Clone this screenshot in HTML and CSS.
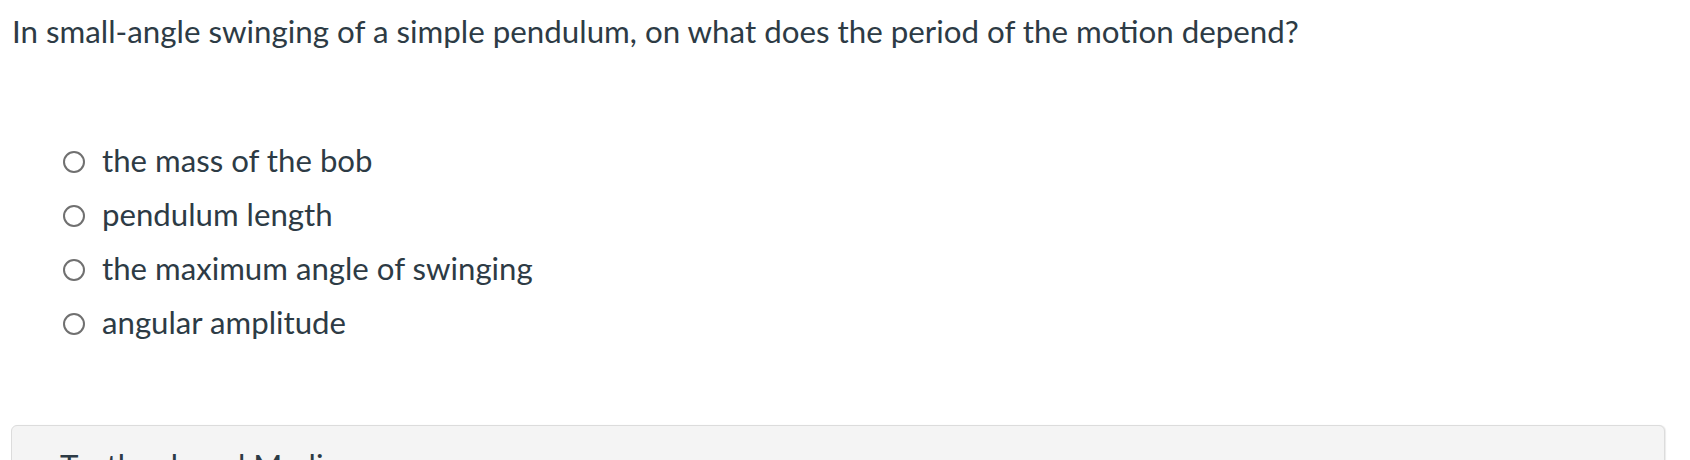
FILE: index.html
```html
<!DOCTYPE html>
<html lang="en">
<head>
<meta charset="utf-8">
<title>Quiz question</title>
<link rel="stylesheet" href="styles.css">
</head>
<body>
<div class="page">
  <p class="question">In small-angle swinging of a simple pendulum, on what does the period of the motion depend?</p>
  <ul class="answers">
    <li class="answer"><span class="radio"></span><span class="label">the mass of the bob</span></li>
    <li class="answer"><span class="radio"></span><span class="label">pendulum length</span></li>
    <li class="answer"><span class="radio"></span><span class="label">the maximum angle of swinging</span></li>
    <li class="answer"><span class="radio"></span><span class="label">angular amplitude</span></li>
  </ul>
  <div class="media">
    <div class="media-title">Textbook and Media</div>
  </div>
</div>
</body>
</html>
```

FILE: styles.css
```css
html, body {
  margin: 0;
  padding: 0;
  background: #ffffff;
}
body {
  font-family: Lato, "Open Sans", sans-serif;
  color: #2d3b45;
}
.page {
  padding: 13px 25px 0 11px;
}
.question {
  margin: 0;
  font-size: 31.3px;
  line-height: 1.2;
  padding-left: 1px;
}
.answers {
  list-style: none;
  margin: 83px 0 0 0;
  padding: 0 0 0 52px;
}
.answer {
  display: flex;
  align-items: center;
  height: 54px;
}
.radio {
  width: 22px;
  height: 22px;
  box-sizing: border-box;
  border: 2px solid #707070;
  border-radius: 50%;
  margin-top: 2px;
  flex: none;
}
.label {
  margin-left: 17px;
  font-size: 31.2px;
  line-height: 1.2;
}
.media {
  margin-top: 75px;
  background: #f4f4f4;
  border: 1px solid #dcdcdc;
  border-radius: 6px;
  box-shadow: 1px 0 1px rgba(0,0,0,0.08);
  padding: 21px 48px;
  height: 120px;
}
.media-title {
  font-size: 31.3px;
  line-height: 1.2;
}
```
